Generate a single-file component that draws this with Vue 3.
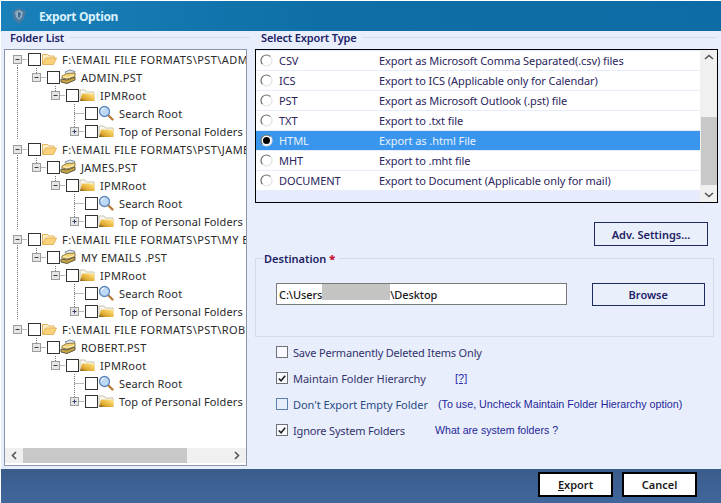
<script setup>
import { ref } from "vue";

// tree rows, one group per pst folder (root path is cut by the panel in the app)
const groups = [
  { path: "F:\\EMAIL FILE FORMATS\\PST\\ADM", pst: "ADMIN.PST" },
  { path: "F:\\EMAIL FILE FORMATS\\PST\\JAME", pst: "JAMES.PST" },
  { path: "F:\\EMAIL FILE FORMATS\\PST\\MY E", pst: "MY EMAILS .PST" },
  { path: "F:\\EMAIL FILE FORMATS\\PST\\ROBE", pst: "ROBERT.PST" },
];
const rows = [];
groups.forEach((g, i) => {
  const last = i === groups.length - 1;
  const side = last ? "blank" : "pipe";
  rows.push({ cells: [last ? "rootEnd" : "root"], icon: "open", label: g.path, kind: "is-root" });
  rows.push({ cells: [side, "minus"], icon: "pst", label: g.pst, kind: "is-pst" });
  rows.push({ cells: [side, "blank", "minus"], icon: "folder", label: "IPMRoot", kind: "is-pst" });
  rows.push({ cells: [side, "blank", "blank", "tee"], icon: "search", label: "Search Root", kind: "" });
  rows.push({ cells: [side, "blank", "blank", "plus"], icon: "folder", label: "Top of Personal Folders", kind: "" });
});

const types = [
  { name: "CSV", desc: "Export as Microsoft Comma Separated(.csv) files" },
  { name: "ICS", desc: "Export to ICS (Applicable only for Calendar)" },
  { name: "PST", desc: "Export as Microsoft Outlook (.pst) file" },
  { name: "TXT", desc: "Export to .txt file" },
  { name: "HTML", desc: "Export as .html File" },
  { name: "MHT", desc: "Export to .mht file" },
  { name: "DOCUMENT", desc: "Export to Document (Applicable only for mail)" },
];
const selected = ref("HTML");

const deleted = ref(false);
const hierarchy = ref(true);
const emptyFolder = ref(false);
const ignoreSystem = ref(true);
</script>

<template>
  <div class="window">
    <svg class="defs" width="0" height="0">
      <defs>
        <linearGradient id="folderFill" x1="0" y1="1" x2="1" y2="0">
          <stop offset="0" stop-color="#6e5418" />
          <stop offset="0.3" stop-color="#dca52c" />
          <stop offset="0.7" stop-color="#f5cd5c" />
          <stop offset="1" stop-color="#ffe9a0" />
        </linearGradient>
      </defs>
    </svg>

    <header class="titlebar">
      <svg class="logo" width="20" height="18" viewBox="0 0 20 18">
        <path d="M3 5l6-4 8 3-2 8-5 5-5-4z" fill="#4f7a9e" />
        <path d="M6 5l4-2 4 2-1 5-3 3-3-3z" fill="#9fb2c2" />
        <path d="M9 5l3 1-1 4-2 1z" fill="#40688c" />
      </svg>
      <span class="title">Export Option</span>
    </header>

    <main class="content">
      <!-- 폴더 목록 -->
      <section class="left">
        <div class="head">
          <span>Folder List</span>
          <i></i>
        </div>
        <div class="tree">
          <div class="tree-body">
            <div v-for="(row, i) in rows" :key="i" class="node">
              <svg v-for="(c, j) in row.cells" :key="j" class="cell" width="19" height="18" viewBox="0 0 19 18">
                <g class="dots">
                  <path v-if="c === 'pipe' || c === 'tee'" d="M9.5 0V18" />
                  <path v-if="c === 'root'" d="M9.5 9V18" />
                  <path v-if="c === 'minus' || c === 'plus'" d="M9.5 0V9" />
                  <path v-if="c !== 'pipe' && c !== 'blank'" d="M9.5 9.5H19" />
                </g>
                <g v-if="c === 'root' || c === 'rootEnd' || c === 'minus' || c === 'plus'">
                  <rect x="5.5" y="5.5" width="8" height="8" fill="#e6e6e6" stroke="#9c9c9c" />
                  <path d="M7.5 9.5h4" stroke="#3c3c3c" />
                  <path v-if="c === 'plus'" d="M9.5 7.5v4" stroke="#2b3f8c" />
                </g>
              </svg>
              <span class="box"></span>
              <svg class="icon" width="16" height="16" viewBox="0 0 16 16">
                <g v-if="row.icon === 'open'">
                  <path d="M1.5 13V3.5h5l1.500 1.500h5v2" fill="#fdeec4" stroke="#e3b45c" />
                  <path d="M1.5 13.5l3-6.500h11l-3 6.500z" fill="#fbd27a" stroke="#e3b45c" />
                </g>
                <g v-else-if="row.icon === 'pst'">
                  <path d="M5 3l5-2 5 1.500-1 2-7 1z" fill="#dfe7ee" stroke="#7b8ea3" />
                  <path d="M2 7l5-2.500 8-.5v3.500l-8 2.500-5-1z" fill="#f2cf72" stroke="#94803f" />
                  <path d="M1 10l6 1 8-3v3l-8 3.500-6-1.500z" fill="#c9a442" stroke="#5e5a45" />
                  <path d="M3 7.500l5 1 6-2" fill="none" stroke="#fff3c4" />
                </g>
                <g v-else-if="row.icon === 'folder'">
                  <path d="M1 13.500V3h5l1.500 2H15v8.500z" fill="#f7f7f2" stroke="#c9c3ab" />
                  <path d="M1 14l2-7.500h12.500V14z" fill="url(#folderFill)" />
                </g>
                <g v-else>
                  <path d="M10 10l4.500 4.500" stroke="#b87b3a" stroke-width="2.400" stroke-linecap="round" />
                  <circle cx="6.500" cy="6.500" r="5" fill="#bcd8f4" stroke="#5f87bd" stroke-width="1.300" />
                  <path d="M3.500 6a3 3 0 0 1 3-3" fill="none" stroke="#fff" />
                </g>
              </svg>
              <span class="node-label" :class="row.kind">{{ row.label }}</span>
            </div>
          </div>
          <div class="hscroll">
            <svg width="18" height="15" viewBox="0 0 18 15"><path d="M11 4l-3.500 3.500L11 11" fill="none" stroke="#555" stroke-width="1.600" /></svg>
            <div class="hthumb"></div>
            <svg width="18" height="15" viewBox="0 0 18 15"><path d="M7 4l3.500 3.500L7 11" fill="none" stroke="#555" stroke-width="1.600" /></svg>
          </div>
        </div>
      </section>

      <section class="right">
        <div class="head">
          <span>Select Export Type</span>
          <i></i>
        </div>
        <!-- 내보내기 형식 -->
        <div class="typebox">
          <div class="typelist">
            <div v-for="t in types" :key="t.name" class="type" :class="{ on: selected === t.name }" @click="selected = t.name">
              <svg class="radio" width="13" height="13" viewBox="0 0 13 13">
                <circle cx="6.500" cy="6.500" r="5.500" fill="#fff" />
                <path d="M2.600 10.400A5.500 5.500 0 0 1 10.400 2.600" fill="none" stroke="#6a6a6a" stroke-width="1.200" />
                <path d="M10.400 2.600A5.500 5.500 0 0 1 2.600 10.400" fill="none" stroke="#e2e2e2" stroke-width="1.200" />
                <circle v-if="selected === t.name" cx="6.500" cy="6.500" r="3.500" fill="#000" />
              </svg>
              <span class="type-name">{{ t.name }}</span>
              <span>{{ t.desc }}</span>
            </div>
          </div>
          <div class="vscroll">
            <svg width="16" height="14" viewBox="0 0 16 14"><path d="M4 9l4-3.500L12 9" fill="none" stroke="#555" stroke-width="1.600" /></svg>
            <div class="vthumb"></div>
            <svg width="16" height="14" viewBox="0 0 16 14"><path d="M4 5l4 3.500L12 5" fill="none" stroke="#555" stroke-width="1.600" /></svg>
          </div>
        </div>

        <div class="adv-row">
          <button class="btn adv">Adv. Settings...</button>
        </div>

        <fieldset class="dest">
          <legend>Destination <b>*</b></legend>
          <div class="dest-row">
            <div class="path">C:\Users<span class="blur"></span>\Desktop</div>
            <button class="btn browse">Browse</button>
          </div>
        </fieldset>

        <!-- 옵션 -->
        <div class="options">
          <div class="option">
            <span class="check" @click="deleted = !deleted"><svg v-if="deleted" width="11" height="11" viewBox="0 0 11 11"><path d="M2 5.500l2.500 2.500 4.500-5.500" fill="none" stroke="#222" stroke-width="1.800" /></svg></span>
            <span class="opt-label">Save Permanently Deleted Items Only</span>
          </div>
          <div class="option">
            <span class="check" @click="hierarchy = !hierarchy"><svg v-if="hierarchy" width="11" height="11" viewBox="0 0 11 11"><path d="M2 5.500l2.500 2.500 4.500-5.500" fill="none" stroke="#222" stroke-width="1.800" /></svg></span>
            <span class="opt-label w-h">Maintain Folder Hierarchy</span>
            <a class="help">[?]</a>
          </div>
          <div class="option">
            <span class="check off" @click="emptyFolder = !emptyFolder"><svg v-if="emptyFolder" width="11" height="11" viewBox="0 0 11 11"><path d="M2 5.500l2.500 2.500 4.500-5.500" fill="none" stroke="#222" stroke-width="1.800" /></svg></span>
            <span class="opt-label off-label w-e">Don't Export Empty Folder</span>
            <span class="note wide">(To use, Uncheck Maintain Folder Hierarchy option)</span>
          </div>
          <div class="option">
            <span class="check" @click="ignoreSystem = !ignoreSystem"><svg v-if="ignoreSystem" width="11" height="11" viewBox="0 0 11 11"><path d="M2 5.500l2.500 2.500 4.500-5.500" fill="none" stroke="#222" stroke-width="1.800" /></svg></span>
            <span class="opt-label w-i">Ignore System Folders</span>
            <span class="note">What are system folders ?</span>
          </div>
        </div>
      </section>
    </main>

    <footer class="footer">
      <button class="foot-btn"><u>E</u>xport</button>
      <button class="foot-btn">Cancel</button>
    </footer>
  </div>
</template>

<style>
html,
body {
  margin: 0;
  background: #fff;
}
</style>

<style scoped>
.window {
  width: 720px;
  height: 502px;
  margin: 1px 0 0 1px;
  display: flex;
  flex-direction: column;
  background: #e8eefb;
  font-family: "Noto Sans", "Liberation Sans", sans-serif;
  font-size: 11px;
  overflow: hidden;
}
.defs {
  display: block;
  height: 0;
}
.titlebar {
  height: 30px;
  flex: none;
  display: flex;
  align-items: center;
  background: linear-gradient(90deg, #1a80ba, #0f6ea6 45%, #0d6ca5);
}
.logo {
  margin-left: 8px;
  opacity: 0.9;
}
.title {
  margin-left: 10px;
  font-size: 12px;
  font-weight: 700;
  letter-spacing: -0.35px;
  color: #d9f1fb;
}
.content {
  flex: 1;
  display: flex;
  min-height: 0;
}
.left {
  width: 249px;
  flex: none;
  display: flex;
  flex-direction: column;
}
.right {
  flex: 1;
  display: flex;
  flex-direction: column;
  min-width: 0;
}
.head {
  height: 13px;
  display: flex;
  align-items: center;
  gap: 5px;
  font-weight: 600;
  letter-spacing: -0.15px;
  color: #1e2266;
}
.left .head {
  padding-left: 9px;
}
.right .head {
  padding-left: 11px;
  margin-right: 4px;
}
.head i {
  flex: 1;
  height: 1px;
  background: #d6ddec;
}
.tree {
  flex: none;
  height: 417px;
  margin: 5px 0 0 3px;
  width: 243px;
  box-sizing: border-box;
  border: 1px solid #8b95ab;
  background: #fff;
  display: flex;
  flex-direction: column;
}
.tree-body {
  flex: 1;
  overflow: hidden;
  padding: 0 0 0 3px;
  color: #2a2a2a;
}
.node {
  height: 18px;
  display: flex;
  align-items: center;
  white-space: nowrap;
}
.cell {
  flex: none;
}
.dots path {
  fill: none;
  stroke: #777;
  stroke-dasharray: 1 1;
}
.box {
  flex: none;
  width: 11px;
  height: 11px;
  margin-left: 1px;
  border: 1px solid #333;
  background: #fff;
}
.icon {
  flex: none;
}
.node-label {
  margin-left: 5px;
  letter-spacing: 0.13px;
}
.is-root {
  letter-spacing: 0.42px;
}
.is-pst {
  letter-spacing: 0.28px;
}
.hscroll {
  height: 15px;
  margin-bottom: 2px;
  background: #f0f0f0;
  display: flex;
  align-items: center;
}
.hthumb {
  width: 164px;
  height: 15px;
  background: #c8c8c8;
  margin-right: auto;
}
.typebox {
  height: 154px;
  margin: 5px 3px 0 5px;
  box-sizing: border-box;
  border: 1px solid #000;
  background: #e6ecfb;
  display: flex;
  flex: none;
}
.typelist {
  flex: 1;
  padding-top: 1px;
  min-width: 0;
  letter-spacing: -0.07px;
}
.type {
  height: 19px;
  margin-bottom: 1px;
  background: #fff;
  display: flex;
  align-items: center;
  color: #2b2560;
}
.type.on {
  background: #3a96ec;
  color: #e8f2fd;
}
.radio {
  margin-left: 4px;
  flex: none;
}
.type-name {
  width: 100px;
  margin-left: 6px;
  flex: none;
}
.vscroll {
  width: 16px;
  flex: none;
  background: #f0f0f0;
  display: flex;
  flex-direction: column;
  margin-right: 0;
  padding-left: 1px;
}
.vthumb {
  width: 16px;
  height: 68px;
  margin-top: 53px;
  margin-bottom: auto;
  background: #c8c8c8;
}
.adv-row {
  display: flex;
  justify-content: flex-end;
  margin: 19px 13px 0 0;
}
.btn {
  box-sizing: border-box;
  width: 114px;
  background: #eaf0fb;
  border: 1px solid #1f2a60;
  border-radius: 0;
  color: #1e2266;
  font: 600 11px "Noto Sans", "Liberation Sans", sans-serif;
  padding: 0;
}
.adv {
  height: 24px;
}
.dest {
  margin: 5px 7px 0 5px;
  padding: 0 8px 0 20px;
  height: 86px;
  box-sizing: border-box;
  border: 1px solid #d4dbea;
  min-width: 0;
}
.dest legend {
  margin-left: -12px;
  padding: 0 4px 0 0;
  font-weight: 600;
  color: #1e2266;
}
.dest legend b {
  color: #c8102e;
}
.dest-row {
  display: flex;
  align-items: flex-start;
  margin-top: 17px;
}
.path {
  width: 292px;
  height: 22px;
  box-sizing: border-box;
  border: 1px solid #7b7b7b;
  background: #fff;
  display: flex;
  align-items: center;
  padding-left: 2px;
  font-weight: 500;
  letter-spacing: -0.1px;
  color: #1a1a1a;
}
.blur {
  width: 68px;
  height: 16px;
  margin-top: -4px;
  background: #c4c5c2;
}
.browse {
  height: 23px;
  margin-left: 25px;
}
.options {
  margin: 2px 0 0 26px;
  color: #33336e;
}
.option {
  height: 26px;
  display: flex;
  align-items: center;
}
.check {
  width: 10px;
  height: 10px;
  flex: none;
  border: 1px solid #70707a;
  background: #f7f9fe;
  display: flex;
  align-items: center;
  justify-content: center;
}
.check.off {
  border-color: #5b7fb0;
  background: #e8eefb;
}
.opt-label {
  margin-left: 5px;
  letter-spacing: -0.18px;
}
.off-label {
  color: #2b4c85;
}
.w-h {
  width: 162px;
  letter-spacing: -0.03px;
}
.w-e {
  width: 145px;
  letter-spacing: -0.03px;
}
.w-i {
  width: 142px;
}
.help {
  color: #2a2ab0;
  text-decoration: underline;
  font-family: "Liberation Sans", sans-serif;
}
.note {
  color: #26269a;
  font-family: "Liberation Sans", sans-serif;
  font-size: 10.6px;
}
.note.wide {
  font-size: 10.72px;
}
.footer {
  height: 34px;
  flex: none;
  display: flex;
  justify-content: flex-end;
  gap: 9px;
  padding: 3px 24px 0 0;
  box-sizing: border-box;
  background: linear-gradient(180deg, #3a5c8b, #40669c);
}
.foot-btn {
  width: 75px;
  height: 25px;
  box-sizing: border-box;
  background: #fff;
  border: 2px solid #000;
  border-radius: 0;
  color: #1a1a1a;
  font: 600 11px "Noto Sans", "Liberation Sans", sans-serif;
  padding: 0;
}
</style>
